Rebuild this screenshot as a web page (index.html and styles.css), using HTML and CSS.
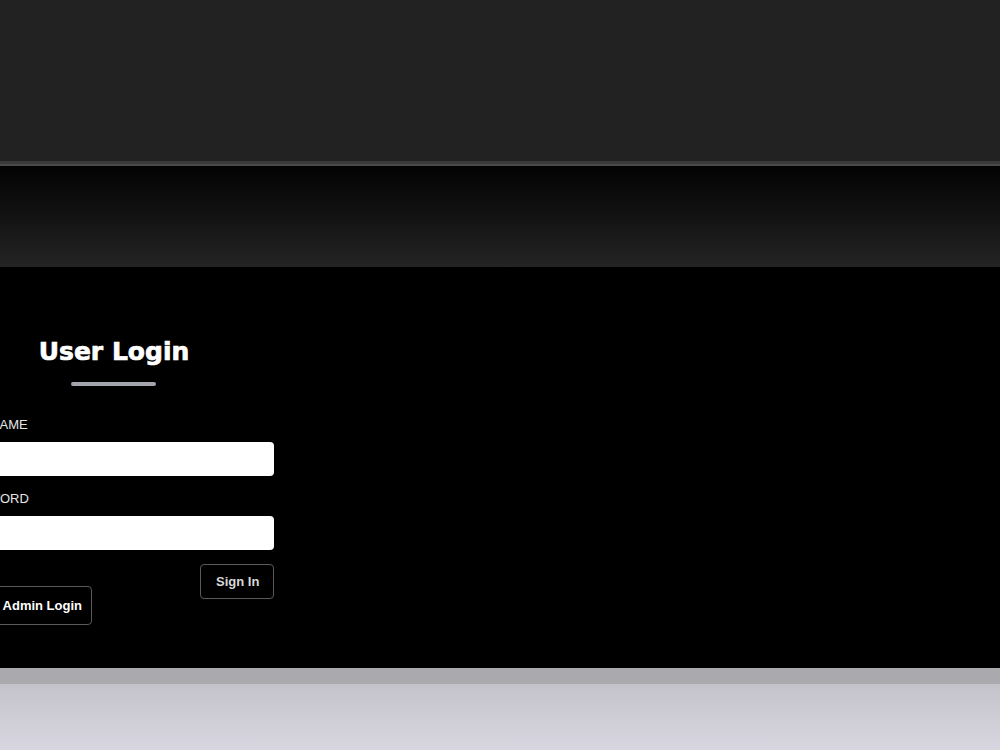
FILE: index.html
```html
<!DOCTYPE html>
<html lang="en">
<head>
<meta charset="utf-8">
<title>User Login</title>
<link rel="stylesheet" href="styles.css">
</head>
<body>
  <header class="topbar"></header>
  <div class="rule"></div>
  <section class="hero"></section>
  <main class="main">
    <form class="login" onsubmit="return false;">
      <h1 class="title">User Login</h1>
      <div class="title-bar"></div>
      <label class="label" for="username">USERNAME</label>
      <input class="field" id="username" type="text">
      <label class="label" for="password">PASSWORD</label>
      <input class="field" id="password" type="password">
      <div class="actions">
        <button class="btn btn-admin" type="button">Admin Login</button>
        <button class="btn btn-signin" type="submit">Sign In</button>
      </div>
    </form>
  </main>
  <div class="foot-band"></div>
  <footer class="footer"></footer>
</body>
</html>
```
FILE: styles.css
```css
html, body {
  margin: 0;
  padding: 0;
  background: #000;
  overflow: hidden;
}
body {
  width: 1000px;
  height: 750px;
  font-family: "Liberation Sans", Arial, sans-serif;
}
.topbar {
  height: 161px;
  background: #222222;
}
.rule {
  height: 2px;
  border-top: 3px solid #3b3b3b;
  background: #4a4a4a;
}
.hero {
  height: 101px;
  background: linear-gradient(to bottom, #030303 0%, #111111 45%, #242424 100%);
}
.main {
  height: 401px;
  background: #000;
  overflow: hidden;
}
.login {
  width: 320px;
  margin-left: -46px;
  display: flex;
  flex-direction: column;
}
.title {
  margin: 70px 0 0;
  font-family: "DejaVu Sans", sans-serif;
  font-weight: bold;
  font-size: 25px;
  line-height: 29px;
  color: #ffffff;
  text-align: center;
  -webkit-text-stroke: 0.7px #ffffff;
}
.title-bar {
  align-self: center;
  width: 85px;
  height: 4px;
  border-radius: 2px;
  background: #a3a5ad;
  margin: 16px 0 0 -1px;
}
.label {
  display: block;
  font-size: 13px;
  line-height: 15px;
  color: #e6e6e6;
  margin: 31px 0 10px;
}
.field + .label {
  margin-top: 15px;
}
.field {
  box-sizing: border-box;
  width: 320px;
  height: 34px;
  border: none;
  border-radius: 4px;
  background: #ffffff;
  margin: 0;
  padding: 0 10px;
}
.actions {
  display: flex;
  justify-content: space-between;
  align-items: flex-start;
  margin-top: 14px;
}
.btn {
  box-sizing: border-box;
  background: #000;
  border: 1px solid #5a5a5a;
  border-radius: 4px;
  font-family: "Liberation Sans", Arial, sans-serif;
  font-weight: bold;
  font-size: 13px;
  line-height: 15px;
  white-space: nowrap;
  cursor: pointer;
}
.btn-signin {
  color: #d8d8d8;
  padding: 0 15px;
  width: 74px;
  height: 35px;
}
.btn-admin {
  color: #ffffff;
  margin-top: 22px;
  margin-left: 38px;
  padding: 0 9px;
  height: 39px;
  width: 100px;
  text-align: right;
}
.foot-band {
  height: 16px;
  background: #aaa9ae;
}
.footer {
  height: 66px;
  background: linear-gradient(to bottom, #c4c3cb 0%, #d8d7e1 100%);
}
```
